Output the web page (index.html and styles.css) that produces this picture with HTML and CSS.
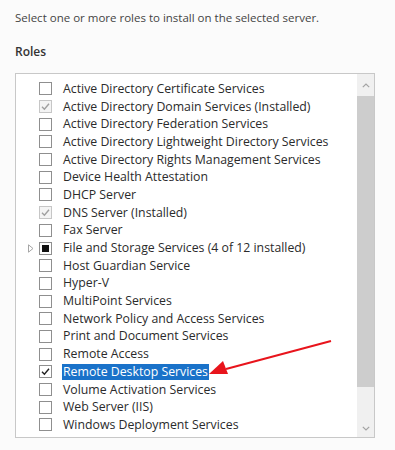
FILE: index.html
```html
<!DOCTYPE html>
<html lang="en">
  <head>
    <meta charset="UTF-8" />
    <meta name="viewport" content="width=device-width, initial-scale=1.0" />
    <title>Select server roles</title>
    <link rel="stylesheet" href="styles.css">
  </head>
  <body>
    <p class="intro">Select one or more roles to install on the selected server.</p>
    <h2 class="section-title">Roles</h2>

    <div class="listbox">
      <ul class="roles">
        <li class="role"><span class="box"></span><span class="name">Active Directory Certificate Services</span></li>
        <li class="role installed"><span class="box"><svg viewBox="0 0 13 13"><path d="M3 6.8 L5.4 9.2 L10 3.8" /></svg></span><span class="name">Active Directory Domain Services (Installed)</span></li>
        <li class="role"><span class="box"></span><span class="name">Active Directory Federation Services</span></li>
        <li class="role"><span class="box"></span><span class="name">Active Directory Lightweight Directory Services</span></li>
        <li class="role"><span class="box"></span><span class="name">Active Directory Rights Management Services</span></li>
        <li class="role"><span class="box"></span><span class="name">Device Health Attestation</span></li>
        <li class="role"><span class="box"></span><span class="name">DHCP Server</span></li>
        <li class="role installed"><span class="box"><svg viewBox="0 0 13 13"><path d="M3 6.8 L5.4 9.2 L10 3.8" /></svg></span><span class="name">DNS Server (Installed)</span></li>
        <li class="role"><span class="box"></span><span class="name">Fax Server</span></li>
        <li class="role partial">
          <svg class="expander" viewBox="0 0 6 9"><path d="M0.5 0.8 L5 4.5 L0.5 8.2 Z" /></svg>
          <span class="box"><span class="fill"></span></span><span class="name">File and Storage Services (4 of 12 installed)</span>
        </li>
        <li class="role"><span class="box"></span><span class="name">Host Guardian Service</span></li>
        <li class="role"><span class="box"></span><span class="name">Hyper-V</span></li>
        <li class="role"><span class="box"></span><span class="name">MultiPoint Services</span></li>
        <li class="role"><span class="box"></span><span class="name">Network Policy and Access Services</span></li>
        <li class="role"><span class="box"></span><span class="name">Print and Document Services</span></li>
        <li class="role"><span class="box"></span><span class="name">Remote Access</span></li>
        <li class="role checked selected"><span class="box"><svg viewBox="0 0 13 13"><path d="M3 6.8 L5.4 9.2 L10 3.8" /></svg></span><span class="name">Remote Desktop Services</span></li>
        <li class="role"><span class="box"></span><span class="name">Volume Activation Services</span></li>
        <li class="role"><span class="box"></span><span class="name">Web Server (IIS)</span></li>
        <li class="role"><span class="box"></span><span class="name">Windows Deployment Services</span></li>
      </ul>

      <div class="scrollbar">
        <div class="scroll-btn">
          <svg viewBox="0 0 8 5"><path d="M0.8 4.2 L4 1 L7.2 4.2" /></svg>
        </div>
        <div class="thumb"></div>
        <div class="scroll-rest">
          <svg viewBox="0 0 8 5"><path d="M0.8 0.8 L4 4 L7.2 0.8" /></svg>
        </div>
      </div>

      <svg class="pointer" viewBox="0 0 130 40">
        <path class="shaft" d="M125 2 L20 30" />
        <path class="head" d="M3 35 L17 22 L22 35 Z" />
      </svg>
    </div>
  </body>
</html>
```

FILE: styles.css
```css
body {
  margin: 0;
  padding: 10px 0 0 15px;
  background-color: #fbfbfb;
  font-family: "Open Sans", "Noto Sans", sans-serif;
  font-size: 11.5px;
  color: #333;
}
.intro {
  margin: 0;
  line-height: 16px;
  color: #444;
}
.section-title {
  margin: 18px 0 0;
  font-size: 12px;
  font-weight: 600;
  line-height: 16px;
  color: #333;
}
.listbox {
  position: relative;
  display: flex;
  width: 360px;
  height: 365px;
  margin-top: 13px;
  box-sizing: border-box;
  border: 1px solid #c8c8c8;
  background-color: #fff;
}
.roles {
  flex: 1;
  list-style: none;
  margin: 0;
  padding: 6px 0 0 23px;
  font-size: 12.3px;
  color: #2b2b2b;
}
.role {
  position: relative;
  display: flex;
  align-items: center;
  height: 17.7px;
  white-space: nowrap;
}
.box {
  display: flex;
  align-items: center;
  justify-content: center;
  width: 13px;
  height: 13px;
  box-sizing: border-box;
  border: 1px solid #8f8f8f;
  background-color: #fff;
  margin-right: 10px;
  flex-shrink: 0;
}
.box svg {
  width: 13px;
  height: 13px;
  flex-shrink: 0;
}
.box path {
  fill: none;
  stroke: #222;
  stroke-width: 1.4;
}
.installed .box {
  border-color: #c6c6c6;
  background-color: #f4f4f4;
}
.installed .box path {
  stroke: #a0a0a0;
}
.fill {
  width: 7px;
  height: 7px;
  background-color: #111;
}
.expander {
  position: absolute;
  left: -11px;
  width: 6px;
  height: 9px;
}
.expander path {
  fill: none;
  stroke: #a6a6a6;
  stroke-width: 1;
}
.name {
  line-height: 16px;
  padding: 0 1px;
}
.selected .name {
  background-color: #1a72c9;
  color: #fff;
}
.scrollbar {
  display: flex;
  flex-direction: column;
  width: 17px;
  background-color: #f0f0f0;
}
.scroll-btn {
  height: 22px;
  display: flex;
  align-items: center;
  justify-content: center;
}
.thumb {
  height: 291px;
  background-color: #cdcdcd;
}
.scroll-rest {
  flex: 1;
  display: flex;
  align-items: flex-end;
  justify-content: center;
  padding-bottom: 6px;
}
.scrollbar svg {
  width: 8px;
  height: 5px;
}
.scrollbar path {
  fill: none;
  stroke: #a3a3a3;
  stroke-width: 1.2;
}
.pointer {
  position: absolute;
  left: 190px;
  top: 265px;
  width: 130px;
  height: 40px;
}
.shaft {
  stroke: #e8141c;
  stroke-width: 2;
}
.head {
  fill: #e8141c;
}
```
